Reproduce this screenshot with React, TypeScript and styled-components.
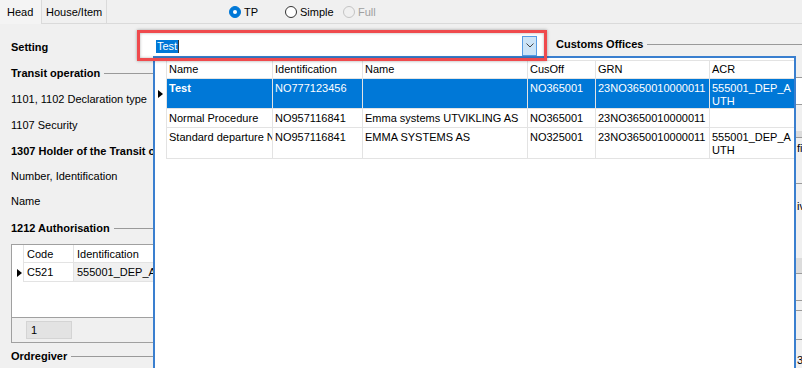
import React from 'react';
import styled, { createGlobalStyle, css } from 'styled-components';

const GlobalStyle = createGlobalStyle`
    html, body {
        margin: 0;
        padding: 0;
        background: #f0f0f0;
    }
    body {
        font-family: 'Liberation Sans', Arial, sans-serif;
        font-size: 11px;
        color: #000;
    }
`;

const Window = styled.div`
    position: relative;
    width: 802px;
    height: 368px;
    overflow: hidden;
    background: #f0f0f0;
`;

const TabBar = styled.div`
    display: flex;
    align-items: stretch;
    height: 23px;
    border-bottom: 1px solid #dadada;
`;

const Tab = styled.div<{ $width: number; $active?: boolean }>`
    display: flex;
    align-items: center;
    box-sizing: border-box;
    width: ${(p) => p.$width}px;
    padding-left: ${(p) => (p.$active ? 7 : 4)}px;
    border-right: 1px solid #dadada;
    background: ${(p) => (p.$active ? '#f4f4f4' : '#f0f0f0')};
    margin-bottom: ${(p) => (p.$active ? '-1px' : '0')};
`;

const RadioGroup = styled.div`
    display: flex;
    align-items: center;
    margin-left: 122px;
`;

const RadioItem = styled.label<{ $width?: number; $disabled?: boolean }>`
    display: flex;
    align-items: center;
    gap: 3px;
    width: ${(p) => (p.$width ? `${p.$width}px` : 'auto')};
    color: ${(p) => (p.$disabled ? '#a0a0a0' : '#000')};
`;

const RadioDot = styled.span<{ $checked?: boolean; $disabled?: boolean }>`
    display: flex;
    align-items: center;
    justify-content: center;
    box-sizing: border-box;
    width: 12px;
    height: 12px;
    border-radius: 50%;
    border: 1px solid ${(p) => (p.$disabled ? '#c4c4c4' : p.$checked ? '#0078d7' : '#333')};
    background: ${(p) => (p.$checked ? '#0078d7' : p.$disabled ? '#f0f0f0' : '#fff')};
    ${(p) =>
        p.$checked &&
        css`
            &::after {
                content: '';
                width: 4px;
                height: 4px;
                border-radius: 50%;
                background: #fff;
            }
        `}
`;

const Body = styled.div`
    display: flex;
    padding-left: 11px;
`;

const LeftPane = styled.div`
    display: flex;
    flex-direction: column;
    width: 533px;
    flex: none;
`;

const RightPane = styled.div`
    display: flex;
    flex-direction: column;
    margin-left: 12px;
    flex: 1;
    min-width: 300px;
`;

const SettingRow = styled.div`
    display: flex;
    align-items: center;
    height: 25px;
    margin-top: 9px;
    margin-bottom: 2px;
`;

const Label = styled.div<{ $width: number; $bold?: boolean; $nudge?: number }>`
    width: ${(p) => p.$width}px;
    flex: none;
    padding-top: ${(p) => p.$nudge ?? 0}px;
    white-space: nowrap;
    font-weight: ${(p) => (p.$bold ? 'bold' : 'normal')};
`;

const ComboField = styled.div`
    position: relative;
    display: flex;
    align-items: center;
    width: 404px;
    height: 25px;
    background: #fff;

    &::after {
        content: '';
        position: absolute;
        inset: -3px;
        border: 3px solid #ef4a4d;
        box-shadow: 0 0 3px rgba(0, 0, 0, 0.35), inset 0 0 3px rgba(0, 0, 0, 0.3);
        pointer-events: none;
        z-index: 3;
    }
`;

const ComboText = styled.span`
    margin: 2px 0 0 16px;
    padding: 0 1px;
    line-height: 13px;
    background: #0078d7;
    color: #fff;
    border-right: 1px solid #333;
`;

const DropButton = styled.div`
    display: flex;
    align-items: center;
    justify-content: center;
    box-sizing: border-box;
    width: 15px;
    height: 20px;
    margin-left: auto;
    margin-right: 7px;
    background: #cce4f7;
    border: 1px solid #569de5;
`;

const Popup = styled.div`
    position: absolute;
    top: 23px;
    left: 13px;
    box-sizing: border-box;
    width: 643px;
    height: 330px;
    padding-top: 2px;
    border: 2px solid #3a7fcf;
    background: #fff;
    z-index: 2;
`;

const GridRow = styled.div<{ $h: number; $selected?: boolean }>`
    display: flex;
    height: ${(p) => p.$h}px;
    color: ${(p) => (p.$selected ? '#fff' : '#000')};
`;

const Indicator = styled.div`
    display: flex;
    align-items: center;
    width: 11px;
    flex: none;
    padding-left: 3px;
    box-sizing: border-box;
    background: #fff;
`;

const Arrow = styled.span`
    width: 0;
    height: 0;
    border-top: 4px solid transparent;
    border-bottom: 4px solid transparent;
    border-left: 5px solid #000;
`;

const Cell = styled.div<{ $w: number; $header?: boolean; $selected?: boolean; $wrap?: boolean; $bold?: boolean }>`
    width: ${(p) => p.$w}px;
    flex: none;
    box-sizing: border-box;
    padding: ${(p) => (p.$header ? '2px' : '3px')} 2px 0;
    line-height: 13px;
    overflow: hidden;
    text-overflow: clip;
    white-space: ${(p) => (p.$wrap ? 'normal' : 'nowrap')};
    word-break: ${(p) => (p.$wrap ? 'break-all' : 'normal')};
    font-weight: ${(p) => (p.$bold ? 'bold' : 'normal')};
    background: ${(p) => (p.$selected ? '#0078d7' : '#fff')};
    border-left: 1px solid #e3e3e3;
    border-bottom: 1px solid #e3e3e3;
    border-top: ${(p) => (p.$header ? '1px solid #e3e3e3' : 'none')};
`;

const FieldRow = styled.div<{ $h: number }>`
    display: flex;
    align-items: center;
    height: ${(p) => p.$h}px;
`;

const TextBox = styled.div`
    flex: 1;
    height: 20px;
    box-sizing: border-box;
    border: 1px solid #7a7a7a;
    background: #fff;
`;

const Heading = styled.div<{ $h: number; $top?: number }>`
    display: flex;
    align-items: center;
    height: ${(p) => p.$h}px;
    margin-top: ${(p) => p.$top ?? 0}px;
    font-weight: bold;
    white-space: nowrap;

    &::after {
        content: '';
        flex: 1;
        height: 1px;
        margin-left: 4px;
        background: #9a9a9a;
    }
`;

const AuthGrid = styled.div`
    display: flex;
    flex-direction: column;
    height: 99px;
    margin-top: 2px;
    box-sizing: border-box;
    border: 1px solid #a0a0a0;
    background: #fff;
`;

const AuthRow = styled.div<{ $h: number }>`
    display: flex;
    height: ${(p) => p.$h}px;
`;

const AuthCell = styled.div<{ $w?: number; $current?: boolean }>`
    display: flex;
    align-items: center;
    box-sizing: border-box;
    width: ${(p) => (p.$w ? `${p.$w}px` : 'auto')};
    flex: ${(p) => (p.$w ? 'none' : '1')};
    padding-left: 3px;
    white-space: nowrap;
    overflow: hidden;
    border-left: 1px solid #e3e3e3;
    border-bottom: 1px solid #e3e3e3;
    background: ${(p) => (p.$current ? '#f0f0f0' : '#fff')};
`;

const AuthIndicator = styled.div`
    display: flex;
    align-items: center;
    width: 11px;
    flex: none;
    padding-left: 5px;
    box-sizing: border-box;
`;

const AuthFooter = styled.div`
    display: flex;
    align-items: center;
    height: 24px;
    margin-top: auto;
    padding-left: 14px;
    border-top: 1px solid #a0a0a0;
    background: #f0f0f0;
`;

const PagerBox = styled.div`
    display: flex;
    align-items: center;
    box-sizing: border-box;
    width: 46px;
    height: 18px;
    padding-left: 4px;
    background: #e3e3e3;
    border: 1px solid #d4d4d4;
`;

/* pieces of the right-hand form that peek out beside the open drop-down */
const EdgeBox = styled.div<{ $h: number; $tone?: 'field' | 'band' | 'rule' | 'gap' }>`
    height: ${(p) => p.$h}px;
    flex: none;
    box-sizing: border-box;
    ${(p) =>
        p.$tone === 'field' &&
        css`
            background: #fff;
            border-top: 1px solid #9a9a9a;
            border-bottom: 1px solid #9a9a9a;
        `}
    ${(p) =>
        p.$tone === 'band' &&
        css`
            background: #dcdcdc;
            border-bottom: 1px solid #9a9a9a;
        `}
    ${(p) =>
        p.$tone === 'rule' &&
        css`
            border-top: 1px solid #9a9a9a;
        `}
`;

const EdgeLabel = styled.div<{ $h: number }>`
    display: flex;
    align-items: center;
    height: ${(p) => p.$h}px;
    padding-left: 241px;
    white-space: nowrap;
`;

const columns = [
    { title: 'Name', w: 106 },
    { title: 'Identification', w: 90 },
    { title: 'Name', w: 165 },
    { title: 'CusOff', w: 68 },
    { title: 'GRN', w: 114 },
    { title: 'ACR', w: 85 },
];

const settings = [
    { h: 30, selected: true, cells: ['Test', 'NO777123456', '', 'NO365001', '23NO3650010000011', '555001_DEP_AUTH'] },
    { h: 19, cells: ['Normal Procedure', 'NO957116841', 'Emma systems UTVIKLING AS', 'NO365001', '23NO3650010000011', ''] },
    { h: 31, cells: ['Standard departure Norway', 'NO957116841', 'EMMA SYSTEMS AS', 'NO325001', '23NO3650010000011', '555001_DEP_AUTH'] },
];

const leftRows = [
    { heading: true, text: 'Transit operation', h: 26 },
    { text: '1101, 1102 Declaration type', h: 25 },
    { text: '1107 Security', h: 27 },
    { heading: true, text: '1307 Holder of the Transit operation', h: 25 },
    { text: 'Number, Identification', h: 25 },
    { text: 'Name', h: 26 },
    { heading: true, text: '1212 Authorisation', h: 28 },
];

const Chevron = () => (
    <svg width="8" height="5" viewBox="0 0 8 5">
        <polyline points="0.5,0.5 4,4 7.5,0.5" fill="none" stroke="#444" strokeWidth="1" />
    </svg>
);

const App = () => (
    <Window>
        <GlobalStyle />
        <TabBar>
            <Tab $width={42} $active>Head</Tab>
            <Tab $width={65}>House/Item</Tab>
            <RadioGroup>
                <RadioItem $width={56}>
                    <RadioDot $checked />
                    TP
                </RadioItem>
                <RadioItem $width={58}>
                    <RadioDot />
                    Simple
                </RadioItem>
                <RadioItem $disabled>
                    <RadioDot $disabled />
                    Full
                </RadioItem>
            </RadioGroup>
        </TabBar>
        <Body>
            <LeftPane>
                <SettingRow>
                    <Label $width={129} $bold $nudge={3}>Setting</Label>
                    <ComboField>
                        <ComboText>Test</ComboText>
                        <DropButton>
                            <Chevron />
                        </DropButton>
                        <Popup>
                            <GridRow $h={19}>
                                <Indicator />
                                {columns.map((c, i) => (
                                    <Cell key={i} $w={c.w} $header>{c.title}</Cell>
                                ))}
                            </GridRow>
                            {settings.map((r, ri) => (
                                <GridRow key={ri} $h={r.h} $selected={r.selected}>
                                    <Indicator>{r.selected && <Arrow />}</Indicator>
                                    {r.cells.map((v, ci) => (
                                        <Cell
                                            key={ci}
                                            $w={columns[ci].w}
                                            $selected={r.selected}
                                            $wrap={ci === 5}
                                            $bold={r.selected && ci === 0}
                                        >
                                            {v}
                                        </Cell>
                                    ))}
                                </GridRow>
                            ))}
                        </Popup>
                    </ComboField>
                </SettingRow>
                {leftRows.map((r, i) =>
                    r.heading ? (
                        <Heading key={i} $h={r.h}>{r.text}</Heading>
                    ) : (
                        <FieldRow key={i} $h={r.h}>
                            <Label $width={142}>{r.text}</Label>
                            <TextBox />
                        </FieldRow>
                    ),
                )}
                <AuthGrid>
                    <AuthRow $h={18}>
                        <AuthIndicator />
                        <AuthCell $w={50}>Code</AuthCell>
                        <AuthCell>Identification</AuthCell>
                    </AuthRow>
                    <AuthRow $h={19}>
                        <AuthIndicator>
                            <Arrow />
                        </AuthIndicator>
                        <AuthCell $w={50}>C521</AuthCell>
                        <AuthCell $current>555001_DEP_AUTH</AuthCell>
                    </AuthRow>
                    <AuthFooter>
                        <PagerBox>1</PagerBox>
                    </AuthFooter>
                </AuthGrid>
                <Heading $h={26}>Ordregiver</Heading>
            </LeftPane>
            <RightPane>
                <Heading $h={20} $top={10}>Customs Offices</Heading>
                <EdgeBox $h={23} />
                <EdgeBox $h={28} $tone="field" />
                <EdgeBox $h={26} />
                <EdgeBox $h={7} $tone="band" />
                <EdgeLabel $h={20}>fi</EdgeLabel>
                <EdgeBox $h={25} />
                <EdgeBox $h={1} $tone="rule" />
                <EdgeLabel $h={44}>ive</EdgeLabel>
                <EdgeBox $h={30} />
                <EdgeBox $h={16} $tone="band" />
                <EdgeBox $h={26} />
                <EdgeBox $h={10} $tone="rule" />
                <EdgeBox $h={29} $tone="rule" />
                <EdgeBox $h={11} $tone="rule" />
                <EdgeLabel $h={20}>3</EdgeLabel>
            </RightPane>
        </Body>
    </Window>
);

export default App;
